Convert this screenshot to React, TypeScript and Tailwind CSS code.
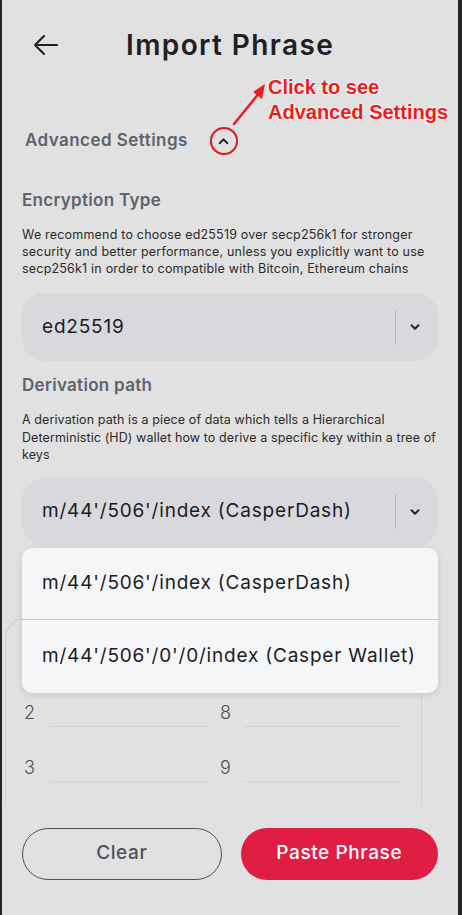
import React from 'react';

const font = { fontFamily: 'Inter, "Noto Sans", sans-serif' };

function ChevronDown() {
  return (
    <svg width="14" height="14" viewBox="0 0 24 24" fill="none" stroke="#1f2937" strokeWidth="3.5" strokeLinecap="round" strokeLinejoin="round">
      <path d="M6 9l6 6 6-6" />
    </svg>
  );
}

function SelectBox({ value }: { value: string }) {
  return (
    <div className="flex h-[68px] items-center rounded-[22px] bg-[#d8d9dc] pl-5 pr-4">
      <span className="flex-1 text-[19px] tracking-[0.8px] text-[#1c1c1e]">{value}</span>
      <div className="h-[35px] w-px bg-[#b3b6c4]" />
      <div className="ml-3 flex w-[14px] items-center justify-center">
        <ChevronDown />
      </div>
    </div>
  );
}

function WordRow({ n1, n2 }: { n1: number; n2: number }) {
  return (
    <div className="flex h-[55px] items-center">
      <span className="w-[25px] pl-[18px] text-[18px] font-light text-[#4b4f57]">{n1}</span>
      <div className="ml-[19px] mt-[28px] h-px w-[157px] bg-[#d3d3d3]" />
      <span className="ml-[13px] w-[24px] text-[18px] font-light text-[#4b4f57]">{n2}</span>
      <div className="mt-[28px] h-px w-[158px] bg-[#d3d3d3]" />
    </div>
  );
}

export default function App() {
  return (
    <div className="relative h-[915px] w-[462px] overflow-hidden border-l-[2px] border-r-[4px] border-[#252525] bg-[#e1e1e1]" style={font}>
      {/* Header */}
      <div className="mt-[17px] flex h-[56px] items-center">
        <div className="ml-[31px] w-[26px]">
          <svg width="26" height="22" viewBox="0 0 26 22" fill="none" stroke="#1f1f1f" strokeWidth="2" strokeLinecap="round" strokeLinejoin="round">
            <path d="M24 11H2M11 2L2 11l9 9" />
          </svg>
        </div>
        <h1 className="ml-[67px] text-[28px] font-semibold tracking-[1.4px] text-[#1f2025]">Import Phrase</h1>
      </div>

      <div className="px-[20px]">
        {/* Advanced settings toggle */}
        <div className="mt-[53px] flex h-[30px] items-center pl-[3px]">
          <span className="text-[17px] font-semibold tracking-[0.45px] text-[#5c6370]">Advanced Settings</span>
          <div className="ml-[22px] flex h-[28px] w-[28px] items-center justify-center rounded-full border-2 border-[#e3151b]">
            <svg width="13" height="13" viewBox="0 0 24 24" fill="none" stroke="#111" strokeWidth="3.5" strokeLinecap="round" strokeLinejoin="round">
              <path d="M5 15l7-7 7 7" />
            </svg>
          </div>
        </div>

        {/* Encryption type */}
        <h2 className="mt-[32px] text-[17px] font-semibold leading-[24px] tracking-[0.3px] text-[#5c6370]">Encryption Type</h2>
        <p className="mt-[14px] text-[12.5px] leading-[17px] tracking-[0.2px] text-[#2b2b2b]">
          We recommend to choose ed25519 over secp256k1 for stronger security and better performance, unless you explicitly want to use secp256k1 in order to compatible with Bitcoin, Ethereum chains
        </p>
        <div className="mt-[16px]">
          <SelectBox value="ed25519" />
        </div>

        {/* Derivation path */}
        <h2 className="mt-[12px] text-[17px] font-semibold leading-[24px] tracking-[0.3px] text-[#5c6370]">Derivation path</h2>
        <p className="mt-[14px] text-[12.5px] leading-[17.5px] tracking-[0.1px] text-[#2b2b2b]">
          A derivation path is a piece of data which tells a Hierarchical Deterministic (HD) wallet how to derive a specific key within a tree of keys
        </p>
        <div className="relative z-10 mt-[14px]">
          <SelectBox value="m/44'/506'/index (CasperDash)" />
          <div className="absolute left-0 right-0 top-full mt-[2px] overflow-hidden rounded-[10px] bg-[#f5f6f8] shadow-[0_2px_6px_rgba(0,0,0,0.12)]">
            <div className="flex h-[72px] items-center border-b border-[#c8c8cc] pl-5 text-[19px] tracking-[0.8px] text-[#1c1c1e]">m/44'/506'/index (CasperDash)</div>
            <div className="flex h-[73px] items-center pl-5 text-[19px] tracking-[0.8px] text-[#1c1c1e]">m/44'/506'/0'/0/index (Casper Wallet)</div>
          </div>
        </div>
      </div>

      {/* Word card, its first row sits behind the open dropdown */}
      <div className="ml-[3px] mr-[36px] mt-[71px] h-[188px] rounded-tl-[22px] border-l border-r border-t border-[#d0d0d0] pt-[67px]">
        <WordRow n1={2} n2={8} />
        <WordRow n1={3} n2={9} />
      </div>

      {/* Buttons */}
      <div className="mt-[23px] flex gap-[19px] px-[20px]">
        <button className="h-[52px] flex-1 rounded-full border border-[#4b5260] text-[19px] font-medium tracking-[0.6px] text-[#4b5260]">Clear</button>
        <button className="h-[52px] flex-1 rounded-full bg-[#e21d43] text-[19px] font-medium tracking-[0.6px] text-white">Paste Phrase</button>
      </div>

      {/* Annotation overlay */}
      <svg className="absolute left-[226px] top-[80px]" width="44" height="48" viewBox="0 0 44 48" fill="none">
        <path d="M6 44L32 12" stroke="#ef1b1b" strokeWidth="2.5" strokeLinecap="round" />
        <path d="M37 4L25 12L34 19Z" fill="#ef1b1b" />
      </svg>
      <div
        className="absolute left-[266px] top-[75px] text-[20px] font-bold leading-[25px] text-[#ec1c1c]"
        style={{ fontFamily: '"Liberation Sans", Arial, sans-serif', textShadow: '0 0 2px #fff, 0 0 2px #fff, 0 0 2px #fff' }}
      >
        <div>Click to see</div>
        <div>Advanced Settings</div>
      </div>
    </div>
  );
}
